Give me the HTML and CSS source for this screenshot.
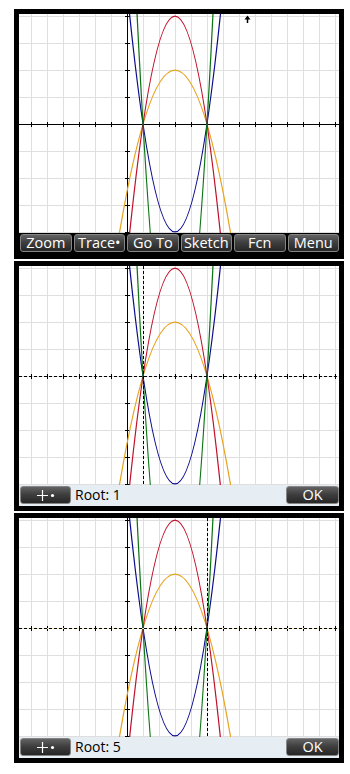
FILE: index.html
```html
<!DOCTYPE html>
<html>
<head>
<meta charset="utf-8">
<link rel="stylesheet" href="styles.css">
</head>
<body>
<div class="screens">

  <section class="screen">
    <div class="plot">
      <svg class="graph" viewBox="0 0 320 240" width="320" height="240">
        <g class="axes">
          <line x1="0" y1="110.5" x2="320" y2="110.5"/>
          <line x1="108.5" y1="0" x2="108.5" y2="240"/>
          <line class="xticks" x1="12" y1="110.5" x2="320" y2="110.5"/>
          <line class="yticks" x1="108.5" y1="2" x2="108.5" y2="240"/>
        </g>
        <g class="curves">
          <path class="c-orange" d="M84 329.4 Q156 -217.4 228 329.4"/>
          <path class="c-red" d="M100 332.8 Q156 -328.8 212 332.8"/>
          <path class="c-blue" d="M100 -112.8 Q156 548.8 212 -112.8"/>
          <path class="c-green" d="M112.8 -112.1 Q156 872.1 199.2 -112.1"/>
        </g>
        <g class="arrow">
          <line x1="228.5" y1="3" x2="228.5" y2="9"/>
          <polygon points="225.5,5.5 228.5,1.5 231.5,5.5"/>
        </g>
      </svg>
    </div>
    <nav class="menubar dark">
      <span class="key">Zoom</span>
      <span class="key">Trace•</span>
      <span class="key">Go To</span>
      <span class="key">Sketch</span>
      <span class="key">Fcn</span>
      <span class="key">Menu</span>
    </nav>
  </section>

  <section class="screen">
    <div class="plot">
      <svg class="graph" viewBox="0 0 320 240" width="320" height="240">
        <g class="axes">
          <line x1="108.5" y1="0" x2="108.5" y2="240"/>
          <line class="xticks" x1="12" y1="110.5" x2="320" y2="110.5"/>
          <line class="yticks" x1="108.5" y1="2" x2="108.5" y2="240"/>
        </g>
        <g class="curves">
          <path class="c-orange" d="M84 329.4 Q156 -217.4 228 329.4"/>
          <path class="c-red" d="M100 332.8 Q156 -328.8 212 332.8"/>
          <path class="c-blue" d="M100 -112.8 Q156 548.8 212 -112.8"/>
          <path class="c-green" d="M112.8 -112.1 Q156 872.1 199.2 -112.1"/>
        </g>
        <g class="cross">
          <line x1="0" y1="110.5" x2="320" y2="110.5"/>
          <line x1="124.5" y1="0" x2="124.5" y2="240"/>
        </g>
      </svg>
    </div>
    <nav class="menubar light">
      <span class="key"><svg class="crossicon" viewBox="0 0 18 12" width="18" height="12"><path d="M0 6.5H11M5.5 1V12"/><circle cx="15.5" cy="6.5" r="1.6"/></svg></span>
      <span class="readout">Root: 1</span>
      <span class="key">OK</span>
    </nav>
  </section>

  <section class="screen">
    <div class="plot">
      <svg class="graph" viewBox="0 0 320 240" width="320" height="240">
        <g class="axes">
          <line x1="108.5" y1="0" x2="108.5" y2="240"/>
          <line class="xticks" x1="12" y1="110.5" x2="320" y2="110.5"/>
          <line class="yticks" x1="108.5" y1="2" x2="108.5" y2="240"/>
        </g>
        <g class="curves">
          <path class="c-orange" d="M84 329.4 Q156 -217.4 228 329.4"/>
          <path class="c-red" d="M100 332.8 Q156 -328.8 212 332.8"/>
          <path class="c-blue" d="M100 -112.8 Q156 548.8 212 -112.8"/>
          <path class="c-green" d="M112.8 -112.1 Q156 872.1 199.2 -112.1"/>
        </g>
        <g class="cross tinted">
          <line class="under" x1="0" y1="110.5" x2="320" y2="110.5"/>
          <line x1="0" y1="110.5" x2="320" y2="110.5"/>
          <line x1="188.5" y1="0" x2="188.5" y2="240"/>
        </g>
      </svg>
    </div>
    <nav class="menubar light">
      <span class="key"><svg class="crossicon" viewBox="0 0 18 12" width="18" height="12"><path d="M0 6.5H11M5.5 1V12"/><circle cx="15.5" cy="6.5" r="1.6"/></svg></span>
      <span class="readout">Root: 5</span>
      <span class="key">OK</span>
    </nav>
  </section>

</div>
</body>
</html>
```

FILE: styles.css
```css
html, body {
  margin: 0;
  padding: 0;
  background: #ffffff;
}

.screens {
  display: flex;
  flex-direction: column;
  gap: 2px;
  padding: 9px 0 0 14px;
}

.screen {
  display: grid;
  width: 320px;
  height: 240px;
  border: 5px solid #000;
  overflow: hidden;
  font-family: "Open Sans", "Noto Sans", "DejaVu Sans", sans-serif;
}

.plot,
.menubar {
  grid-area: 1 / 1;
}

.plot {
  width: 320px;
  height: 240px;
  background-color: #ffffff;
  background-image:
    linear-gradient(to right, #dfdfdf 1px, transparent 1px),
    linear-gradient(to bottom, #dfdfdf 1px, transparent 1px);
  background-size: 16px 27px;
  background-position: 12px 2px;
}

.graph {
  display: block;
}

.axes line {
  stroke: #000;
  stroke-width: 1;
  shape-rendering: crispEdges;
}

.axes .xticks {
  stroke-width: 5;
  stroke-dasharray: 1 15;
}

.axes .yticks {
  stroke-width: 5;
  stroke-dasharray: 1 26;
}

.curves path {
  fill: none;
  stroke-width: 1.25;
}

.c-orange { stroke: #e6a21c; }
.c-red { stroke: #c0102a; }
.c-blue { stroke: #0a0a8c; }
.c-green { stroke: #0d7414; }

.arrow line {
  stroke: #000;
  stroke-width: 1.5;
}

.arrow polygon {
  fill: #000;
}

.cross line {
  stroke: #000;
  stroke-width: 1;
  stroke-dasharray: 3 2;
  shape-rendering: crispEdges;
}

.cross .under {
  stroke: #ece6b0;
  stroke-dasharray: none;
}

.menubar {
  align-self: end;
  height: 21px;
  box-sizing: border-box;
  padding: 1px 0 2px 1px;
  display: grid;
  grid-template-columns: repeat(6, 1fr);
  column-gap: 2px;
}

.menubar.dark {
  background: #000;
}

.menubar.light {
  background: #e6edf3;
  grid-template-columns: 51px 1fr 53px;
  column-gap: 4px;
}

.key {
  box-sizing: border-box;
  height: 18px;
  display: flex;
  align-items: center;
  justify-content: center;
  border: 1px solid #858585;
  border-radius: 3px;
  background: linear-gradient(to bottom, #636363 0%, #3f3f3f 45%, #262626 100%);
  color: #ffffff;
  font-size: 14.5px;
  line-height: 1;
  white-space: nowrap;
}

.readout {
  display: flex;
  align-items: center;
  color: #000;
  font-size: 14px;
  line-height: 1;
}

.crossicon path {
  stroke: #fff;
  stroke-width: 1.2;
  fill: none;
}

.crossicon circle {
  fill: #fff;
}
```
